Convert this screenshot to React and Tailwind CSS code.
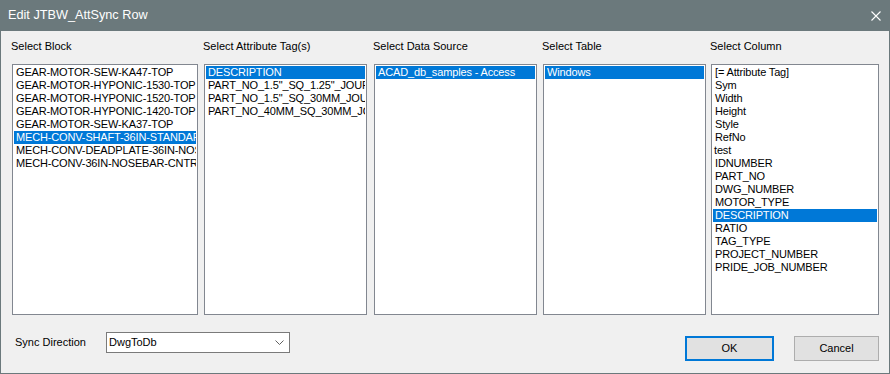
const columns = [
  {
    label: "Select Block",
    width: "w-[186px]",
    gap: "ml-0",
    selected: 5,
    items: [
      "GEAR-MOTOR-SEW-KA47-TOP",
      "GEAR-MOTOR-HYPONIC-1530-TOP",
      "GEAR-MOTOR-HYPONIC-1520-TOP",
      "GEAR-MOTOR-HYPONIC-1420-TOP",
      "GEAR-MOTOR-SEW-KA37-TOP",
      "MECH-CONV-SHAFT-36IN-STANDARD-SHAFT",
      "MECH-CONV-DEADPLATE-36IN-NOSEBAR",
      "MECH-CONV-36IN-NOSEBAR-CNTR-SUPPORT",
    ],
  },
  {
    label: "Select Attribute Tag(s)",
    width: "w-[163px]",
    gap: "ml-[6px]",
    selected: 0,
    items: [
      "DESCRIPTION",
      "PART_NO_1.5\"_SQ_1.25\"_JOURNAL",
      "PART_NO_1.5\"_SQ_30MM_JOURNAL",
      "PART_NO_40MM_SQ_30MM_JOURNAL",
    ],
  },
  {
    label: "Select Data Source",
    width: "w-[163px]",
    gap: "ml-[7px]",
    selected: 0,
    items: ["ACAD_db_samples - Access"],
  },
  {
    label: "Select Table",
    width: "w-[163px]",
    gap: "ml-[6px]",
    selected: 0,
    items: ["Windows"],
  },
  {
    label: "Select Column",
    width: "w-[168px]",
    gap: "ml-[5px]",
    selected: 11,
    items: [
      "[= Attribute Tag]",
      "Sym",
      "Width",
      "Height",
      "Style",
      "RefNo",
      "test",
      "IDNUMBER",
      "PART_NO",
      "DWG_NUMBER",
      "MOTOR_TYPE",
      "DESCRIPTION",
      "RATIO",
      "TAG_TYPE",
      "PROJECT_NUMBER",
      "PRIDE_JOB_NUMBER",
    ],
  },
];

const ListBox = ({ col }) => (
  <div className={`${col.gap} ${col.width} flex flex-col`}>
    <div className="h-[14px] leading-[14px] -ml-px mb-[11px] whitespace-nowrap">{col.label}</div>
    <div className="h-[251px] bg-white border border-[#828790] p-px overflow-hidden">
      {col.items.map((item, i) => (
        <div
          key={item}
          className={`h-[13px] leading-[13px] whitespace-nowrap overflow-hidden tracking-[-0.15px] ${
            item === "test" ? "pl-px" : "pl-[2px]"
          } ${i === col.selected ? "bg-[#0078d7] text-white" : "text-black"}`}
        >
          {item}
        </div>
      ))}
    </div>
  </div>
);

export default function App() {
  return (
    <div className="w-[890px] h-[374px] flex flex-col bg-[#f0f0f0] border border-t-0 border-[#6b797c] text-[11px] text-black font-['Liberation_Sans',Arial,sans-serif]">
      <div className="h-[31px] shrink-0 bg-[#6b797c] flex items-center justify-between pl-[8px] pr-[9px] -mx-px">
        <span className="text-white text-[12.7px]">Edit JTBW_AttSync Row</span>
        <svg width="10" height="10" viewBox="0 0 10 10" className="mt-px">
          <path d="M0.5 0.5 L9.5 9.5 M9.5 0.5 L0.5 9.5" stroke="#ffffff" strokeWidth="1.1" fill="none" />
        </svg>
      </div>

      <div className="flex pl-[11px] pt-[8px]">
        {columns.map((col) => (
          <ListBox key={col.label} col={col} />
        ))}
      </div>

      <div className="flex items-start pl-[14px] pr-[10px] mt-[17px]">
        <div className="w-[91px] h-[21px] leading-[21px]">Sync Direction</div>
        <div className="w-[184px] h-[21px] bg-white border border-[#7a7a7a] flex items-center justify-between pl-[2px] pr-[5px]">
          <span>DwgToDb</span>
          <svg width="9" height="5" viewBox="0 0 9 5">
            <path d="M0.5 0.5 L4.5 4.5 L8.5 0.5" stroke="#606060" strokeWidth="1" fill="none" />
          </svg>
        </div>
        <div className="ml-auto mt-[4px] flex gap-[20px]">
          <button className="w-[89px] h-[25px] bg-[#e1e1e1] border-2 border-[#0078d7] text-[11px]">OK</button>
          <button className="w-[85px] h-[25px] bg-[#e1e1e1] border border-[#adadad] text-[11px]">Cancel</button>
        </div>
      </div>
    </div>
  );
}
